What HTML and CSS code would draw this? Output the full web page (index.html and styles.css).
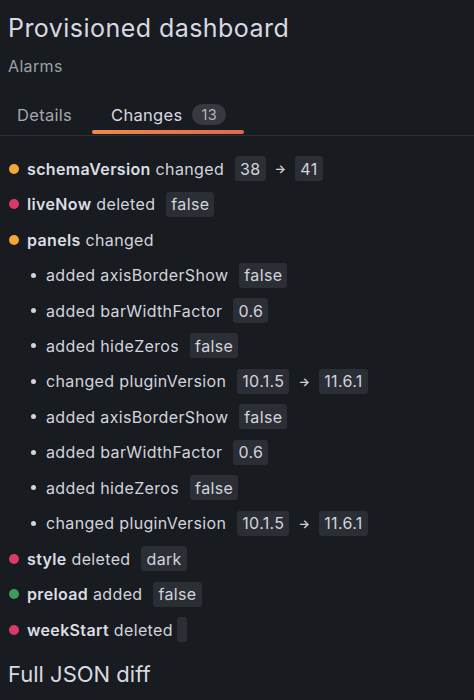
FILE: index.html
```html
<!DOCTYPE html>
<html lang="en">
<head>
<meta charset="utf-8">
<title>Provisioned dashboard</title>
<link rel="stylesheet" href="styles.css">
</head>
<body>
<div class="page">
  <h1 class="title">Provisioned dashboard</h1>
  <div class="subtitle">Alarms</div>
  <div class="tabs">
    <div class="tab">Details</div>
    <div class="tab active">Changes <span class="badge">13</span></div>
  </div>
  <div class="list">
    <div class="row"><span class="dot orange"></span><span class="label"><b>schemaVersion</b> changed</span><span class="chip">38</span><span class="arrow">→</span><span class="chip">41</span></div>
    <div class="row"><span class="dot red"></span><span class="label"><b>liveNow</b> deleted</span><span class="chip">false</span></div>
    <div class="row"><span class="dot orange"></span><span class="label"><b>panels</b> changed</span></div>
    <div class="row sub"><span class="bullet"></span><span class="label">added axisBorderShow</span><span class="chip">false</span></div>
    <div class="row sub"><span class="bullet"></span><span class="label">added barWidthFactor</span><span class="chip">0.6</span></div>
    <div class="row sub"><span class="bullet"></span><span class="label">added hideZeros</span><span class="chip">false</span></div>
    <div class="row sub"><span class="bullet"></span><span class="label">changed pluginVersion</span><span class="chip">10.1.5</span><span class="arrow">→</span><span class="chip">11.6.1</span></div>
    <div class="row sub"><span class="bullet"></span><span class="label">added axisBorderShow</span><span class="chip">false</span></div>
    <div class="row sub"><span class="bullet"></span><span class="label">added barWidthFactor</span><span class="chip">0.6</span></div>
    <div class="row sub"><span class="bullet"></span><span class="label">added hideZeros</span><span class="chip">false</span></div>
    <div class="row sub"><span class="bullet"></span><span class="label">changed pluginVersion</span><span class="chip">10.1.5</span><span class="arrow">→</span><span class="chip">11.6.1</span></div>
    <div class="row"><span class="dot red"></span><span class="label"><b>style</b> deleted</span><span class="chip">dark</span></div>
    <div class="row"><span class="dot green"></span><span class="label"><b>preload</b> added</span><span class="chip">false</span></div>
    <div class="row"><span class="dot red"></span><span class="label"><b>weekStart</b> deleted</span><span class="chip empty"></span></div>
  </div>
  <h2 class="section">Full JSON diff</h2>
</div>
</body>
</html>
```
FILE: styles.css
```css
html, body {
  margin: 0;
  padding: 0;
  background: #181b1f;
}
body {
  font-family: Inter, "Noto Sans", "Liberation Sans", sans-serif;
  color: #d3d4dd;
  height: 700px;
  overflow: hidden;
}
.page {
  padding: 12px 8px 0 8px;
}
.title {
  margin: 0;
  font-size: 25px;
  letter-spacing: 0.45px;
  line-height: 32px;
  font-weight: 400;
  color: #d8d9e2;
}
.subtitle {
  margin-top: 12px;
  font-size: 16px;
  letter-spacing: 0.35px;
  line-height: 20px;
  color: #9ca1ab;
}
.tabs {
  display: flex;
  margin: 20px -8px 0 -8px;
  padding-left: 8px;
  border-bottom: 1px solid #2c2f35;
}
.tab {
  position: relative;
  display: flex;
  align-items: center;
  gap: 10px;
  height: 39px;
  padding: 0 18px 0 19px;
  font-size: 16.5px;
  letter-spacing: 0.3px;
  color: #a3a7b0;
  box-sizing: border-box;
  padding-bottom: 2px;
}
.tab:first-child {
  padding-left: 9px;
  padding-right: 20px;
}
.tab.active {
  color: #d8d9e2;
}
.tab.active::after {
  content: "";
  position: absolute;
  left: 0;
  right: 0;
  bottom: 1px;
  height: 4px;
  border-radius: 2px;
  background: linear-gradient(90deg, #f0894a, #e0684e);
}
.badge {
  display: inline-flex;
  align-items: center;
  justify-content: center;
  height: 21px;
  padding: 0 9px;
  border-radius: 11px;
  background: #36393f;
  color: #b3b6be;
  font-size: 14.5px;
}
.list {
  display: flex;
  flex-direction: column;
  margin-top: 15px;
}
.row {
  display: flex;
  align-items: center;
  height: 35.46px;
  font-size: 16px;
  letter-spacing: 0.35px;
}
.row b {
  font-weight: 600;
  color: #dcdde5;
}
.dot {
  width: 10px;
  height: 10px;
  border-radius: 50%;
  margin-left: 1px;
  margin-right: 8px;
  flex: none;
}
.orange { background: #f4a637; }
.red { background: #d93a68; }
.green { background: #3f9b59; }
.row.sub {
  padding-left: 23px;
}
.bullet {
  width: 5px;
  height: 5px;
  border-radius: 50%;
  background: #d3d4dd;
  margin-right: 10px;
  flex: none;
}
.chip {
  display: inline-flex;
  align-items: center;
  height: 25px;
  padding: 0 5px;
  margin-left: 11px;
  border-radius: 3px;
  background: #2b2e34;
  color: #d3d4dd;
  font-size: 16px;
}
.chip.empty {
  width: 10px;
  padding: 0;
  margin-left: 4px;
}
.arrow {
  font-size: 12px;
  font-weight: 600;
  margin: 0 9px;
  color: #d3d4dd;
}
.arrow + .chip {
  margin-left: 0;
}
.section {
  margin: 13px 0 0 0;
  font-size: 22px;
  letter-spacing: 0;
  line-height: 28px;
  font-weight: 400;
  color: #d8d9e2;
}
```
